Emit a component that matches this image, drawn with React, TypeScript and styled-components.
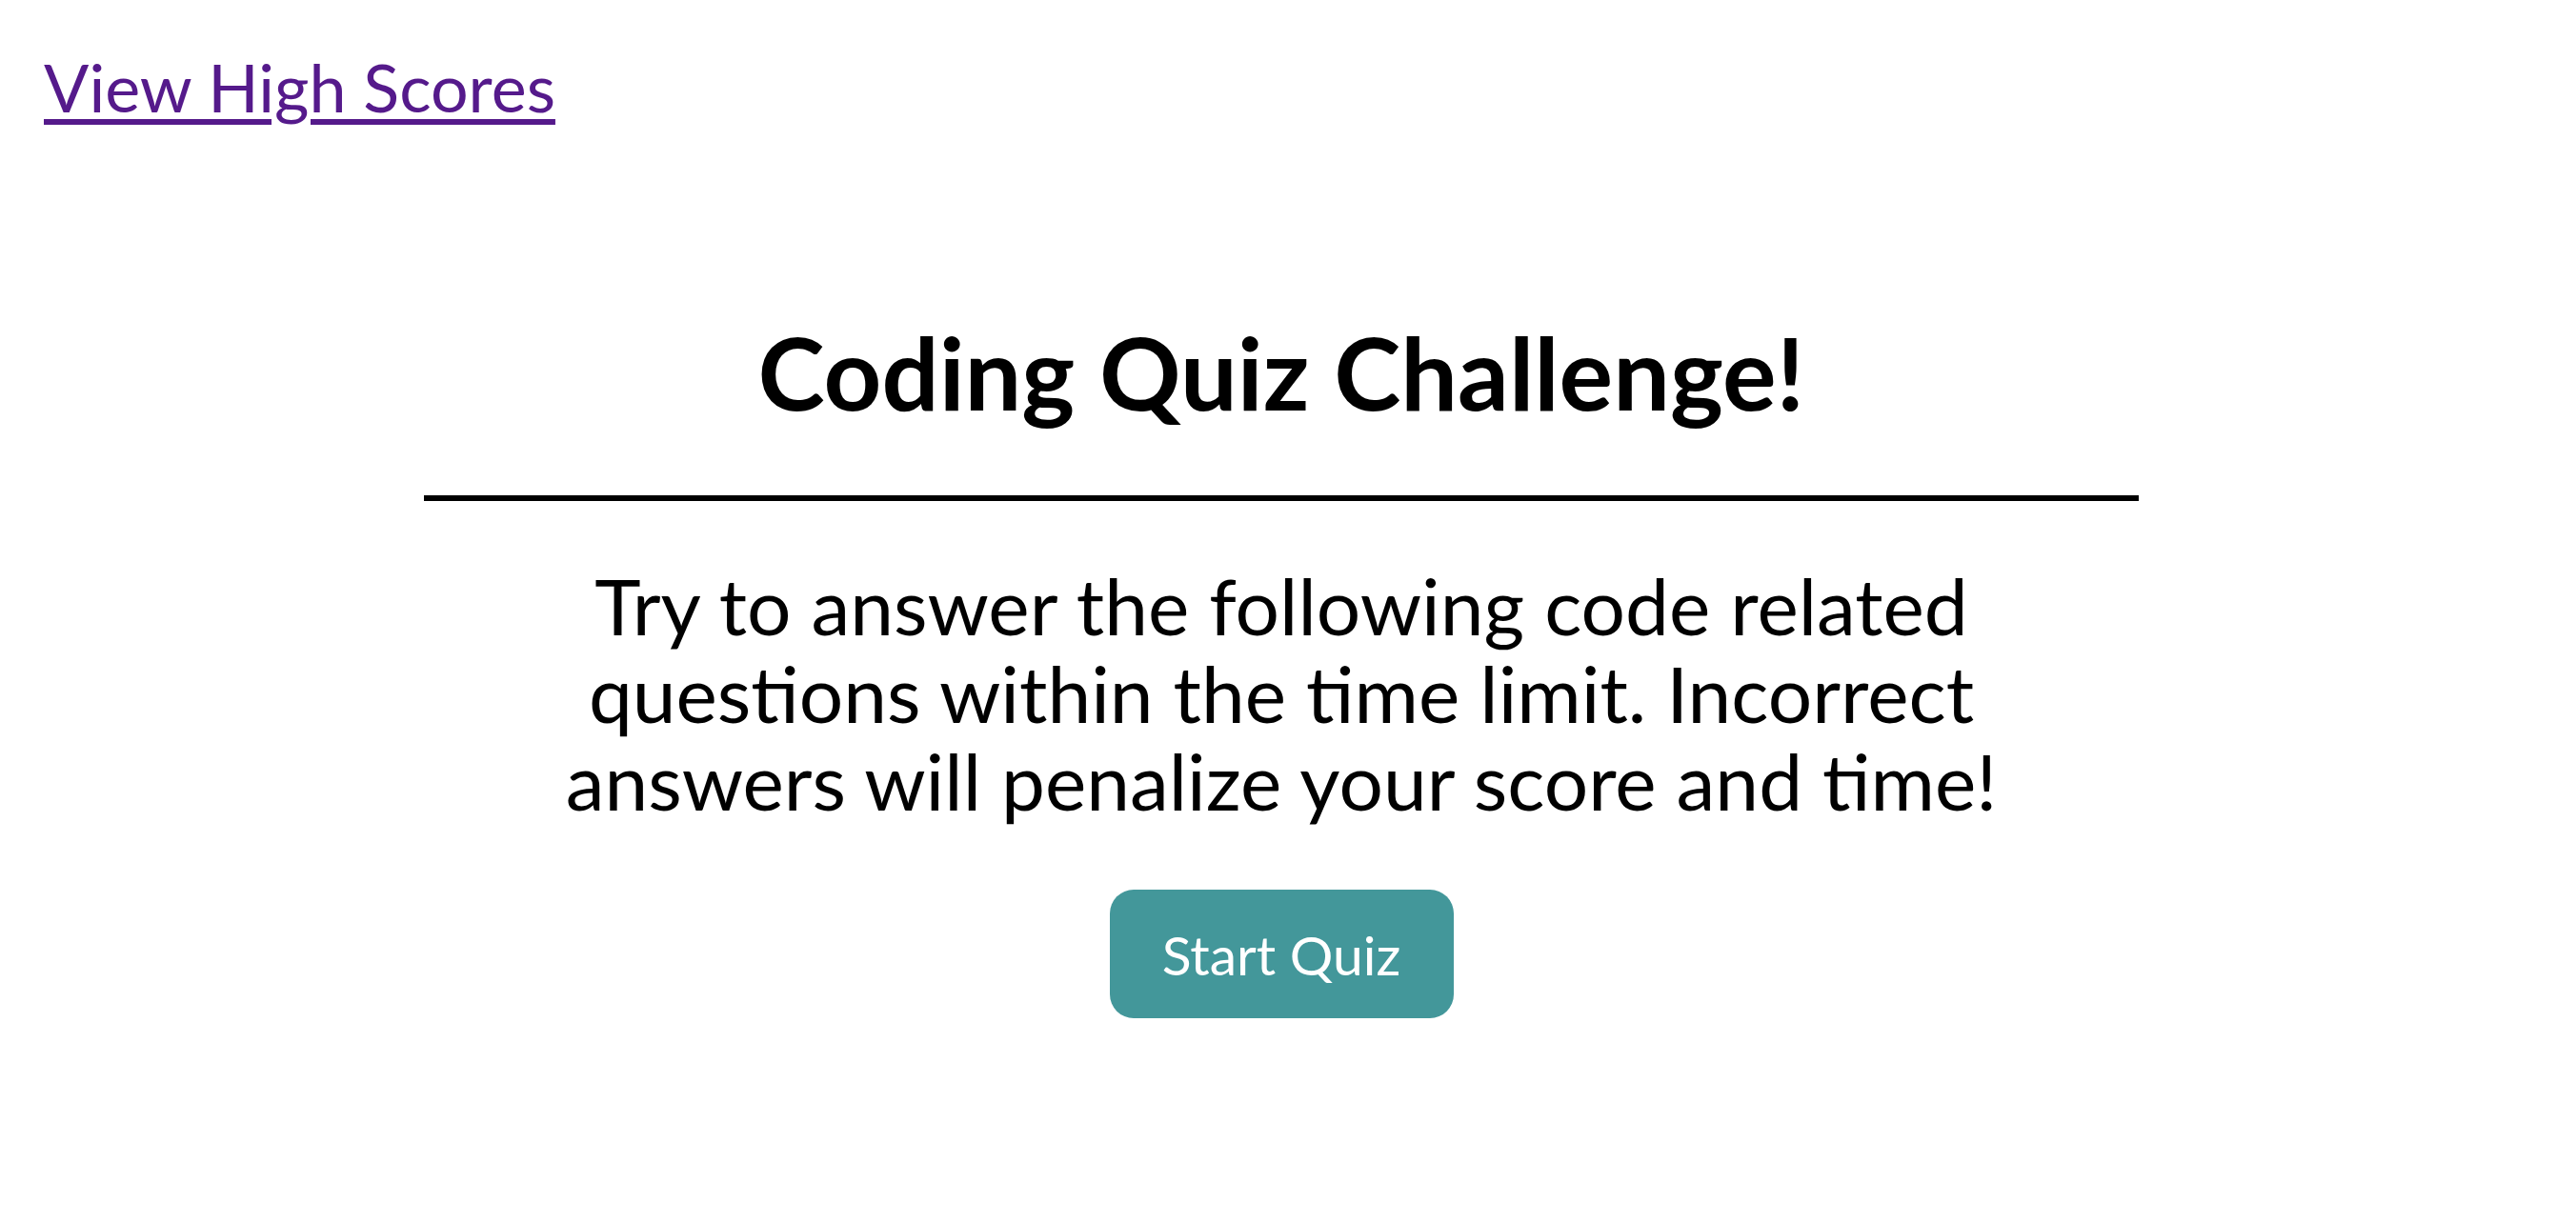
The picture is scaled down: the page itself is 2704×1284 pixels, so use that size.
import styled, { createGlobalStyle } from "styled-components";

const GlobalStyle = createGlobalStyle`
  html, body {
    margin: 0;
    padding: 0;
    background-color: #fff;
  }
  body {
    font-family: "Lato", "Open Sans", sans-serif;
    color: #000;
  }
`;

// the original page is laid out beside a scrollbar gutter
export const Page = styled.div`
  padding-right: 14px;
`;

export const Header = styled.header`
  display: flex;
  justify-content: flex-start;
  align-items: center;
  padding: 49px 46px 0;
`;

export const HighScoresLink = styled.a`
  font-size: 70px;
  line-height: 84px;
  color: #551a8b;
  text-decoration: underline;
  text-decoration-thickness: 6px;
  text-underline-offset: 7px;
`;

export const Main = styled.main`
  display: flex;
  flex-direction: column;
  align-items: center;
  width: 1800px;
  margin: 0 auto;
  padding-top: 194px;
`;

export const Title = styled.h1`
  margin: 0;
  font-size: 106px;
  line-height: 1.2;
  font-weight: 700;
  text-align: center;
`;

export const Divider = styled.hr`
  width: 100%;
  height: 6px;
  margin: 66px 0 0;
  border: none;
  background-color: #000;
`;

export const Intro = styled.p`
  margin: 63px 0 0;
  max-width: 1600px;
  font-size: 82px;
  line-height: 92px;
  text-align: center;
`;

export const StartButton = styled.button`
  margin-top: 69px;
  width: 361px;
  height: 135px;
  border: none;
  border-radius: 25px;
  background-color: #43979a;
  color: #fff;
  font-family: inherit;
  font-size: 57px;
  cursor: pointer;
`;

export default function App() {
  return (
    <Page>
      <GlobalStyle />
      <Header>
        <HighScoresLink href="#highscores">View High Scores</HighScoresLink>
      </Header>
      <Main>
        <Title>Coding Quiz Challenge!</Title>
        <Divider />
        <Intro>
          Try to answer the following code related questions within the time
          limit. Incorrect answers will penalize your score and time!
        </Intro>
        <StartButton type="button">Start Quiz</StartButton>
      </Main>
    </Page>
  );
}
